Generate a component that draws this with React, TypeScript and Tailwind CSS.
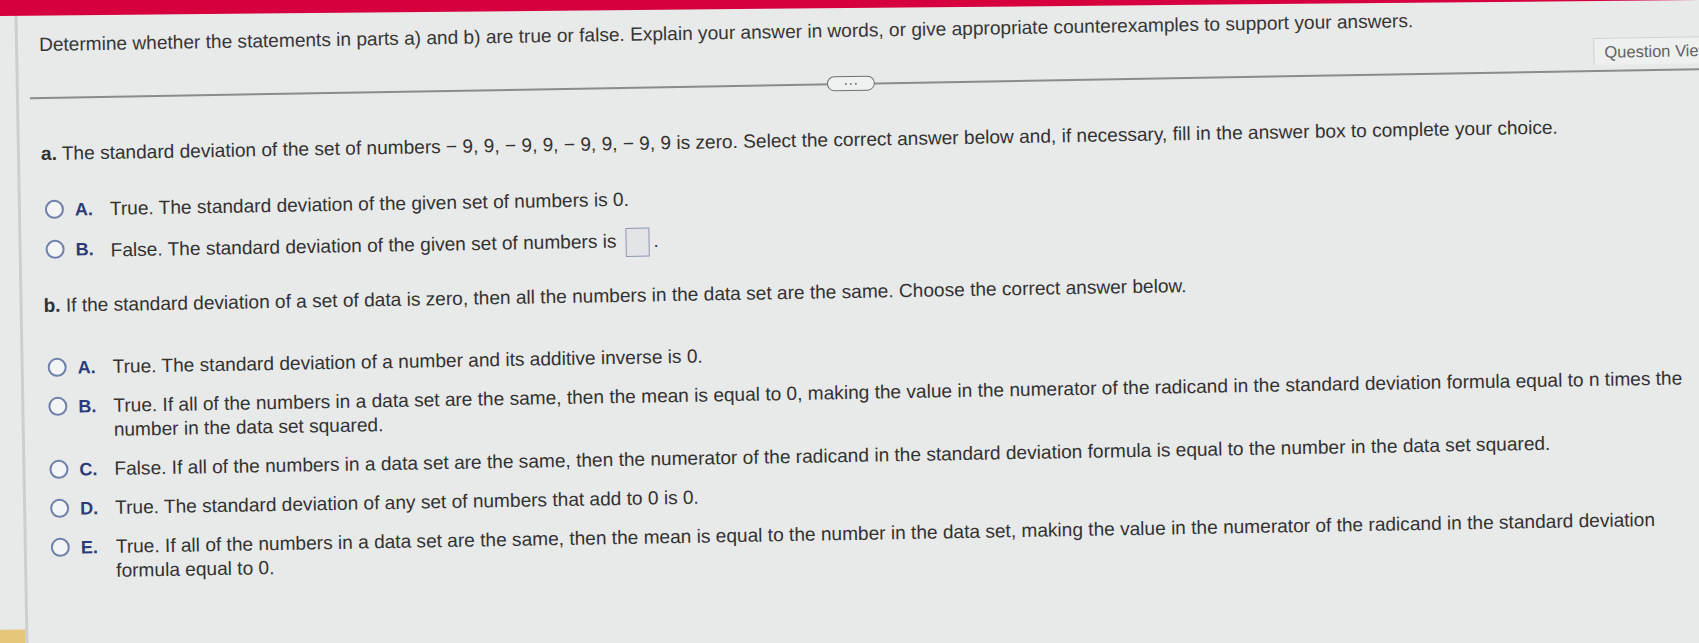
import React from 'react';

type Choice = { letter: string; text: React.ReactNode };

const AnswerBox = () => (
  <span className="inline-block w-[24px] h-[29px] ml-[9px] mr-[4px] align-middle border border-[#8e97b3] bg-[#e2e4e7]" />
);

const partAChoices: Choice[] = [
  { letter: 'A.', text: 'True. The standard deviation of the given set of numbers is 0.' },
  {
    letter: 'B.',
    text: (
      <>
        False. The standard deviation of the given set of numbers is
        <AnswerBox />.
      </>
    ),
  },
];

const partBChoices: Choice[] = [
  { letter: 'A.', text: 'True. The standard deviation of a number and its additive inverse is 0.' },
  {
    letter: 'B.',
    text: 'True. If all of the numbers in a data set are the same, then the mean is equal to 0, making the value in the numerator of the radicand in the standard deviation formula equal to n times the number in the data set squared.',
  },
  {
    letter: 'C.',
    text: 'False. If all of the numbers in a data set are the same, then the numerator of the radicand in the standard deviation formula is equal to the number in the data set squared.',
  },
  { letter: 'D.', text: 'True. The standard deviation of any set of numbers that add to 0 is 0.' },
  {
    letter: 'E.',
    text: 'True. If all of the numbers in a data set are the same, then the mean is equal to the number in the data set, making the value in the numerator of the radicand in the standard deviation formula equal to 0.',
  },
];

const ChoiceRow = ({ choice }: { choice: Choice }) => (
  <div className="flex items-start pl-[3px]">
    {/* radio */}
    <span className="mt-[2px] w-[19px] h-[19px] shrink-0 rounded-full border-2 border-[#6f80ab] bg-[#f3f4f5]" />
    <span className="ml-[11px] w-[35px] shrink-0 text-[18px] font-bold text-[#2b3b7a]">{choice.letter}</span>
    <span className="flex-1">{choice.text}</span>
  </div>
);

export default function App() {
  return (
    <div className="relative w-[1699px] h-[643px] overflow-hidden bg-[#e8e9e9] font-['Liberation_Sans',Arial,sans-serif] text-[19.1px] leading-[24px] text-[#323232]">
      {/* photo is taken slightly tilted */}
      <div className="flex w-[1699px] h-[643px] -rotate-1">
        {/* left gutter */}
        <div className="flex flex-col justify-end w-[30px] -ml-[10px] shrink-0">
          <div className="h-[28px] bg-[#e6c779]" />
        </div>

        <div className="flex-1 border-l-[3px] border-[#cdcfcf] pl-[21px] pt-[19px]">
          <div className="w-[1656px]">
            <p className="text-[#363636]">
              Determine whether the statements in parts a) and b) are true or false. Explain your answer in words, or
              give appropriate counterexamples to support your answers.
            </p>

            {/* Question View tab */}
            <div className="flex justify-end mt-[8px]">
              <div className="flex items-center h-[27px] w-[140px] -mr-[38px] pl-[10px] bg-[#eef0f0] border-l border-t border-[#cfd2d2] text-[16.5px] text-[#626262] whitespace-nowrap overflow-hidden">
                Question View
              </div>
            </div>

            {/* divider with collapse pill */}
            <div className="relative mt-[5px] -ml-[10px] -mr-[60px] h-[2px] bg-[#8a8b8b]">
              <div className="absolute left-[797px] -top-[7px] flex items-center justify-center gap-[3px] w-[48px] h-[15px] rounded-full border-[1.5px] border-[#707070] bg-[#eff0f0]">
                <span className="w-[2px] h-[2px] rounded-full bg-[#777]" />
                <span className="w-[2px] h-[2px] rounded-full bg-[#777]" />
                <span className="w-[2px] h-[2px] rounded-full bg-[#777]" />
              </div>
            </div>

            <p className="mt-[43px]">
              <span className="font-bold">a.</span> The standard deviation of the set of numbers {'\u2212'} 9, 9,{' '}
              {'\u2212'} 9, 9, {'\u2212'} 9, 9, {'\u2212'} 9, 9 is zero. Select the correct answer below and, if
              necessary, fill in the answer box to complete your choice.
            </p>

            <div className="mt-[32px] flex flex-col gap-[16px]">
              {partAChoices.map((c) => (
                <ChoiceRow key={c.letter} choice={c} />
              ))}
            </div>

            <p className="mt-[27px]">
              <span className="font-bold">b.</span> If the standard deviation of a set of data is zero, then all the
              numbers in the data set are the same. Choose the correct answer below.
            </p>

            <div className="mt-[38px] flex flex-col gap-[15px]">
              {partBChoices.map((c) => (
                <ChoiceRow key={c.letter} choice={c} />
              ))}
            </div>
          </div>
        </div>
      </div>

      {/* red header strip, skewed by the camera angle */}
      <div className="absolute top-0 left-0 w-full h-[16px] bg-[#d6003f] [clip-path:polygon(0_0,100%_0,100%_0,0_100%)]" />
    </div>
  );
}
